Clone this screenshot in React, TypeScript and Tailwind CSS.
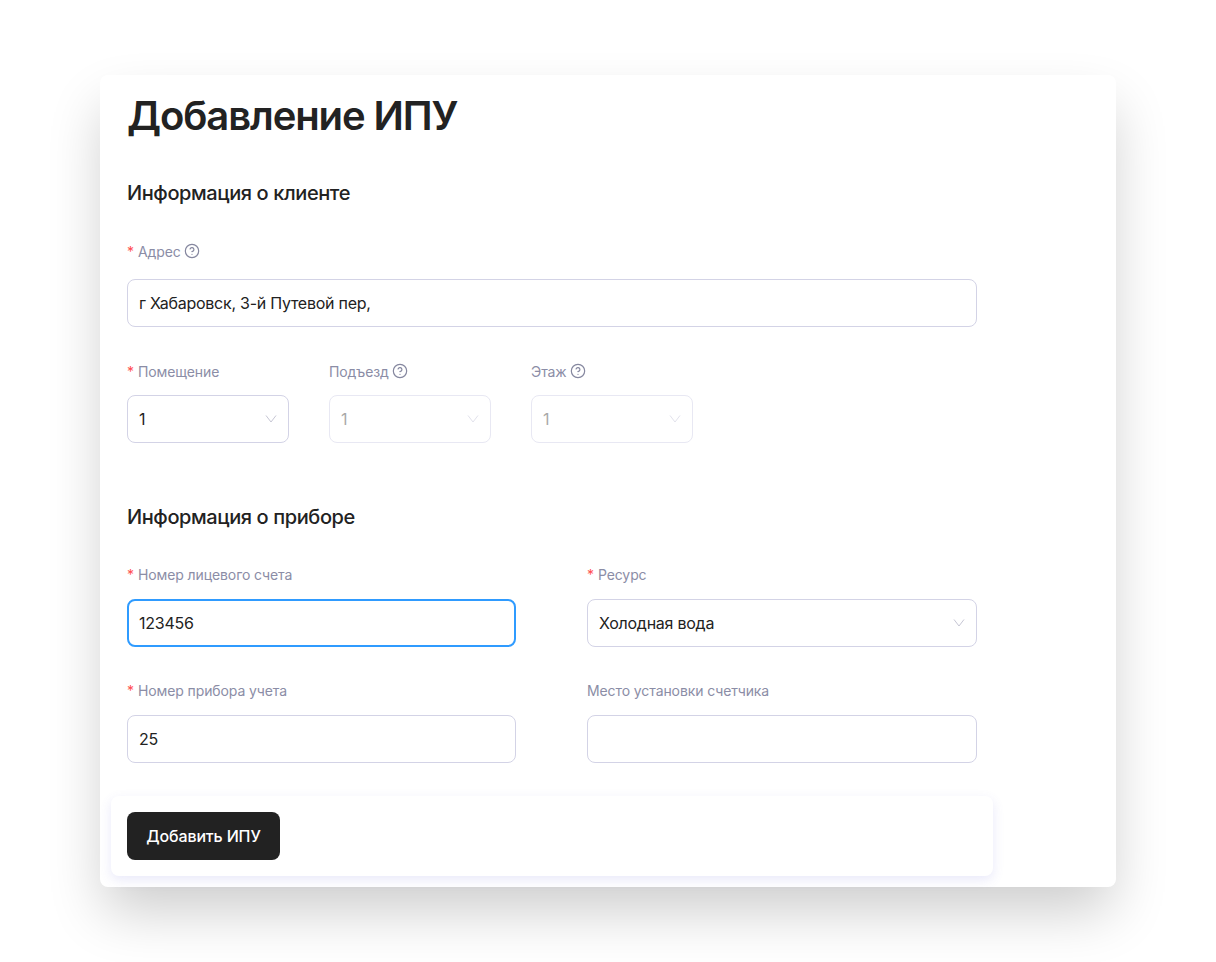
import { ReactNode } from 'react';
import { CircleHelp } from 'lucide-react';

function Label({ children, required, help }: { children: ReactNode; required?: boolean; help?: boolean }) {
  return (
    <div className="flex items-center h-6 text-[14px] text-[#8b8da6] tracking-[-0.1px]">
      {required && <span className="text-[#ff4d4f] mr-1 text-[14px]">*</span>}
      <span>{children}</span>
      {help && <CircleHelp size={16} strokeWidth={1.8} className="ml-[3px] text-[#85879f]" />}
    </div>
  );
}

function Field({ value, focused }: { value?: string; focused?: boolean }) {
  return (
    <input
      readOnly
      defaultValue={value}
      className={`block w-full h-12 rounded-lg bg-white text-[16px] tracking-[-0.25px] text-[#222] outline-none ${
        focused ? 'border-2 border-[#2f9bff] px-[10px]' : 'border border-[#d3d3e6] px-[11px]'
      }`}
    />
  );
}

function Select({ value, disabled }: { value: string; disabled?: boolean }) {
  return (
    <div
      className={`flex items-center justify-between h-12 pl-[11px] pr-[11px] rounded-lg bg-white border text-[16px] tracking-[-0.25px] ${
        disabled ? 'border-[#e8e8f3] text-[#a9a9a9]' : 'border-[#d3d3e6] text-[#222]'
      }`}
    >
      <span>{value}</span>
      <svg width="12" height="10" viewBox="0 0 12 10" fill="none" className={disabled ? 'text-[#e2e2ec]' : 'text-[#c6c6d4]'}>
        <polyline points="1,1.5 6,8 11,1.5" stroke="currentColor" strokeWidth="1" />
      </svg>
    </div>
  );
}

export default function App() {
  return (
    <div className="min-h-[962px] bg-white pt-[75px] pl-[100px] font-['Inter',sans-serif]">
      <div className="w-[1016px] h-[812px] bg-white rounded-lg shadow-[0_28px_56px_-4px_rgba(0,0,0,0.2)] px-[27px] flex flex-col">
        {/* Title */}
        <h1 className="mt-[17px] h-12 leading-[48px] text-[40px] font-semibold text-[#222] tracking-[-1.1px]">Добавление ИПУ</h1>

        {/* Client */}
        <h2 className="mt-[41px] h-6 leading-6 text-[20px] font-medium text-[#222] tracking-[-0.4px]">Информация о клиенте</h2>
        <div className="w-[850px] mt-[34px]">
          <Label required help>Адрес</Label>
          <div className="mt-4"><Field value="г Хабаровск, 3-й Путевой пер," /></div>
        </div>
        <div className="flex gap-10 mt-8">
          <div className="w-[162px]">
            <Label required>Помещение</Label>
            <div className="mt-3"><Select value="1" /></div>
          </div>
          <div className="w-[162px]">
            <Label help>Подъезд</Label>
            <div className="mt-3"><Select value="1" disabled /></div>
          </div>
          <div className="w-[162px]">
            <Label help>Этаж</Label>
            <div className="mt-3"><Select value="1" disabled /></div>
          </div>
        </div>

        {/* Device */}
        <h2 className="mt-[62px] h-6 leading-6 text-[20px] font-medium text-[#222] tracking-[-0.4px]">Информация о приборе</h2>
        <div className="w-[850px] mt-[33px] grid grid-cols-[389px_390px] gap-x-[71px] gap-y-[31px]">
          <div>
            <Label required>Номер лицевого счета</Label>
            <div className="mt-[13px]"><Field value="123456" focused /></div>
          </div>
          <div>
            <Label required>Ресурс</Label>
            <div className="mt-[13px]"><Select value="Холодная вода" /></div>
          </div>
          <div>
            <Label required>Номер прибора учета</Label>
            <div className="mt-[13px]"><Field value="25" /></div>
          </div>
          <div>
            <Label>Место установки счетчика</Label>
            <div className="mt-[13px]"><Field /></div>
          </div>
        </div>

        {/* Footer */}
        <div className="-ml-4 mt-[33px] w-[882px] h-20 p-4 bg-white rounded-lg shadow-[0_4px_12px_rgba(100,100,220,0.14)]">
          <button className="h-12 w-[153px] rounded-lg bg-[#222] text-white text-[16px] tracking-[-0.15px] font-medium">Добавить ИПУ</button>
        </div>
      </div>
    </div>
  );
}
